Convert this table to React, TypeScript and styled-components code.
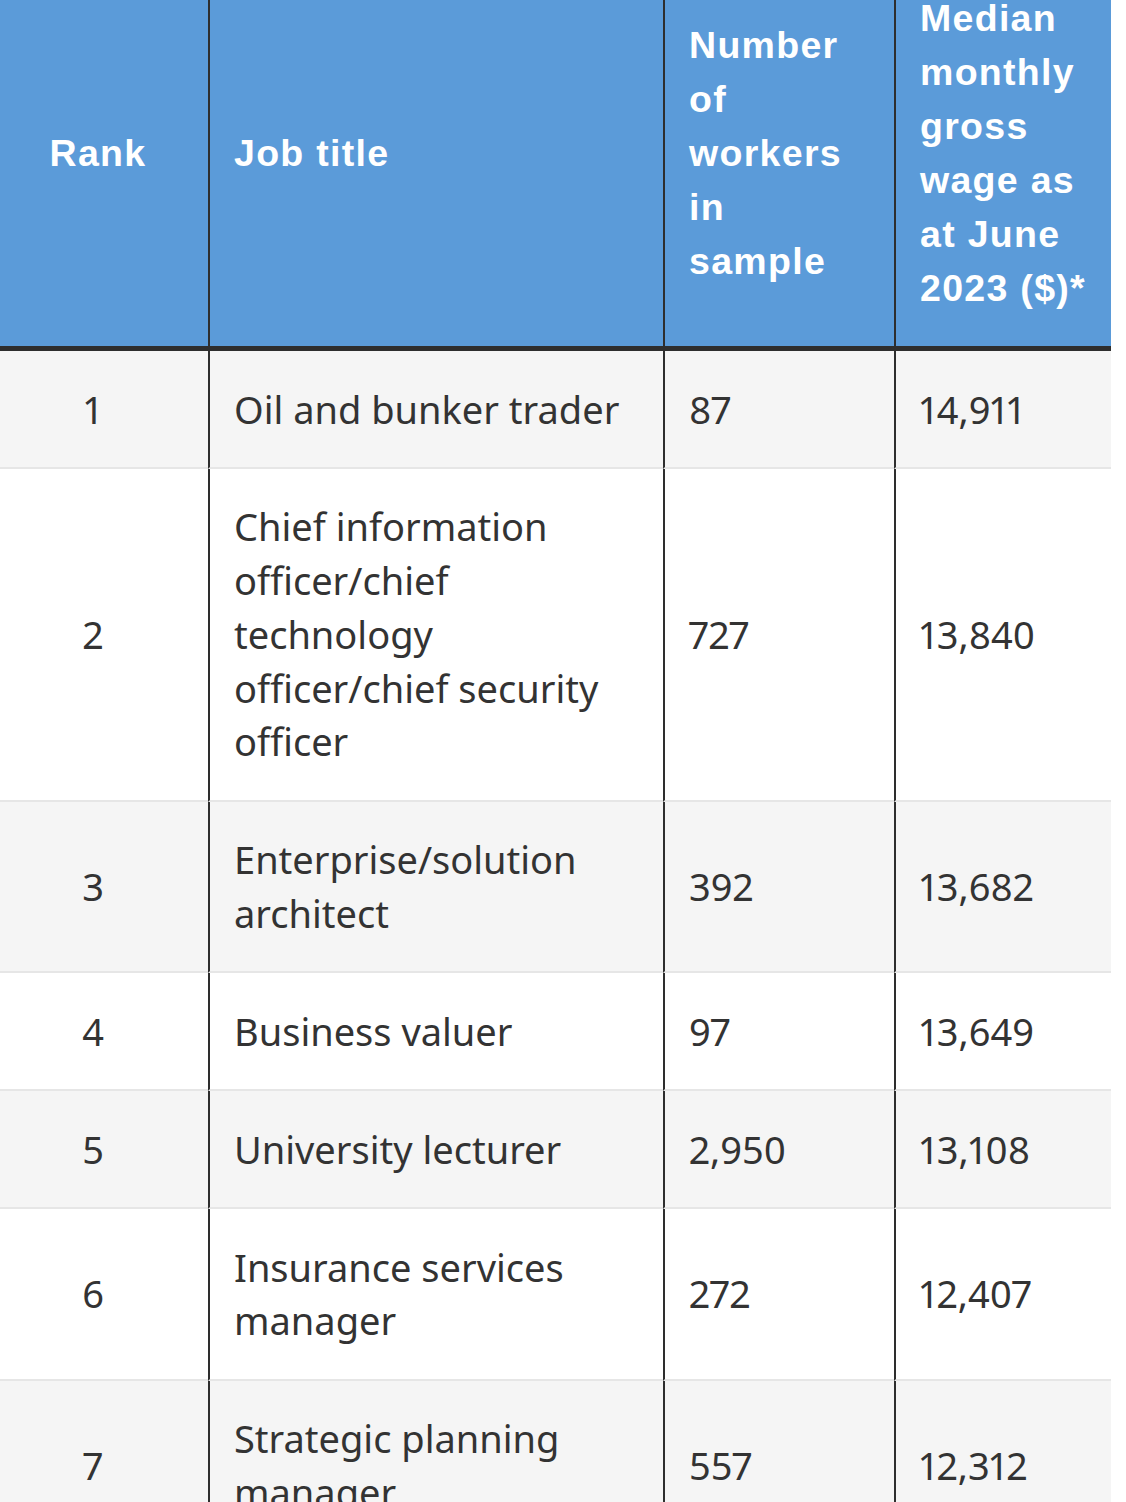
import React from "react";
import styled, { createGlobalStyle } from "styled-components";

const Global = createGlobalStyle`
  html, body { margin: 0; padding: 0; background: #ffffff; }
  body { overflow: hidden; height: 1502px; }
  #root { width: 1126px; }
`;

const Scroller = styled.div`
  width: 1126px;
  height: 1502px;
  overflow: hidden;
  background: #ffffff;
`;

const Table = styled.table`
  table-layout: fixed;
  width: 1133px;
  margin: -40px 0 0 -22px;
  border-collapse: separate;
  border-spacing: 0;
`;

const HeadCell = styled.th<{ $center?: boolean; $first?: boolean }>`
  background: #5b9bd9;
  color: #ffffff;
  font-family: "Liberation Sans", Arial, sans-serif;
  font-weight: 700;
  font-size: 37.5px;
  letter-spacing: 1.3px;
  line-height: 54px;
  text-align: ${(p) => (p.$center ? "center" : "left")};
  vertical-align: middle;
  padding: 31px 14px 31px 24px;
  border-bottom: 5px solid #2e2e2e;
  border-left: ${(p) => (p.$first ? "none" : "2px solid #2e2e2e")};
`;

const Row = styled.tr<{ $shade: boolean }>`
  background: ${(p) => (p.$shade ? "#f5f5f5" : "#ffffff")};
`;

const Cell = styled.td<{ $center?: boolean; $first?: boolean }>`
  color: #333333;
  font-family: "Noto Sans", "Open Sans", sans-serif;
  font-weight: 400;
  font-size: 38px;
  line-height: 53.7px;
  font-variant-numeric: proportional-nums;
  text-align: ${(p) => (p.$center ? "center" : "left")};
  vertical-align: middle;
  padding: 31.6px 24px 30.6px 24px;
  border-bottom: 2px solid #e6e6e6;
  border-left: ${(p) => (p.$first ? "none" : "2px solid #2e2e2e")};
`;

const rows: [string, string, string, string][] = [
  ["1", "Oil and bunker trader", "87", "14,911"],
  ["2", "Chief information officer/chief technology officer/chief security officer", "727", "13,840"],
  ["3", "Enterprise/solution architect", "392", "13,682"],
  ["4", "Business valuer", "97", "13,649"],
  ["5", "University lecturer", "2,950", "13,108"],
  ["6", "Insurance services manager", "272", "12,407"],
  ["7", "Strategic planning manager", "557", "12,312"],
];

export default function App() {
  return (
    <>
      <Global />
      <Scroller>
        <Table>
          <colgroup>
            <col style={{ width: 230 }} />
            <col style={{ width: 455 }} />
            <col style={{ width: 231 }} />
            <col style={{ width: 217 }} />
          </colgroup>
          <thead>
            <tr>
              <HeadCell $center $first>Rank</HeadCell>
              <HeadCell>Job title</HeadCell>
              <HeadCell>Number<br />of<br />workers<br />in<br />sample</HeadCell>
              <HeadCell>Median monthly gross wage as at June 2023 ($)*</HeadCell>
            </tr>
          </thead>
          <tbody>
            {rows.map((r, i) => (
              <Row key={r[0]} $shade={i % 2 === 0}>
                <Cell $center $first>{r[0]}</Cell>
                <Cell>{r[1]}</Cell>
                <Cell>{r[2]}</Cell>
                <Cell>{r[3]}</Cell>
              </Row>
            ))}
          </tbody>
        </Table>
      </Scroller>
    </>
  );
}
